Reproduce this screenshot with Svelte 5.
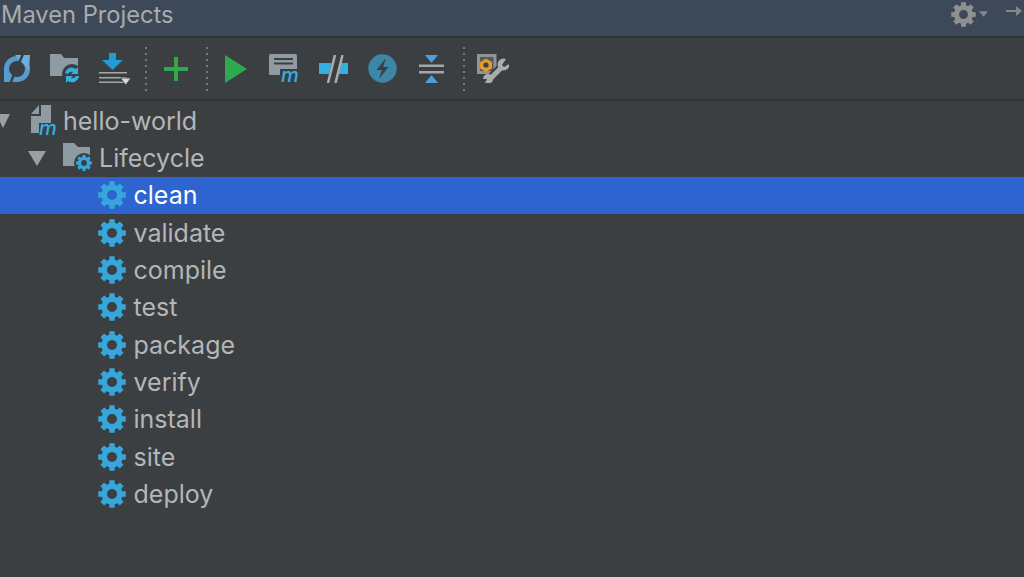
<script lang="ts">
	const goals = ['clean', 'validate', 'compile', 'test', 'package', 'verify', 'install', 'site', 'deploy'];

	// eight-tooth gear, centred on 0,0, hole is cut with evenodd
	function gearPath(outer: number, root: number, hole: number) {
		let d = '';
		for (let i = 0; i < 8; i++) {
			const a = (i * Math.PI) / 4;
			const pts = [
				[a - 0.27, root],
				[a - 0.19, outer],
				[a + 0.19, outer],
				[a + 0.27, root]
			];
			for (const [t, r] of pts) {
				d += `${d ? 'L' : 'M'}${(r * Math.sin(t)).toFixed(2)} ${(-r * Math.cos(t)).toFixed(2)}`;
			}
		}
		d += `ZM${hole} 0A${hole} ${hole} 0 1 0 ${-hole} 0A${hole} ${hole} 0 1 0 ${hole} 0Z`;
		return d;
	}
	const gear = gearPath(14, 10.6, 5);
</script>

<div class="panel">
	<header class="title-bar">
		<span class="title">Maven Projects</span>
		<div class="title-actions">
			<svg width="25" height="25" viewBox="-14 -14 28 28"><path d={gear} fill="#8e9091" fill-rule="evenodd" /></svg>
			<svg class="caret" width="9" height="6" viewBox="0 0 10 6"><path d="M0 0h10L5 6z" fill="#85888b" /></svg>
			<svg class="hide" width="16" height="14" viewBox="0 0 16 14"><path d="M0 6h10v2H0zM10 2l6 5-6 5z" fill="#85888b" /></svg>
		</div>
	</header>

	<div class="toolbar">
		<!-- reimport -->
		<div class="tool">
			<svg width="30" height="30" viewBox="0 0 30 30">
				<circle cx="15" cy="15" r="10.500" fill="none" stroke="#559ccf" stroke-width="5" />
				<path d="M13 1h15L27 16z" fill="#6cb0e0" />
				<path d="M2 28h14L2 12z" fill="#559ccf" />
				<path d="M8 30L21 0" stroke="#3c3f41" stroke-width="2.500" />
			</svg>
		</div>
		<!-- generate sources -->
		<div class="tool">
			<svg width="31" height="30" viewBox="0 0 31 30">
				<path d="M0 0h11l3 4h14v18H0z" fill="#8f9ba3" />
				<circle cx="22" cy="20" r="10" fill="#3c3f41" />
				<path d="M15 19a7 7 0 0 1 11-4l2-2v7h-7l2-2a4 4 0 0 0-5 2zM29 22a7 7 0 0 1-11 5l-2 2v-7h7l-2 2a4 4 0 0 0 5-2z" fill="#35afe0" />
			</svg>
		</div>
		<!-- download -->
		<div class="tool">
			<svg width="32" height="32" viewBox="0 0 32 32">
				<path d="M10 0h7v7h7L13.500 17 3 7h7z" fill="#1f9bd8" />
				<path d="M0 19h28v1.500H0zM0 24h28v1.500H0zM0 28.500h28V30H0z" fill="#a3a7a8" />
				<path d="M21.500 25h10.500l-5.250 7z" fill="#d8d8d8" stroke="#3c3f41" stroke-width=".8" />
			</svg>
		</div>
		<div class="sep first"></div>
		<!-- add -->
		<div class="tool">
			<svg width="24" height="24" viewBox="0 0 24 24">
				<path d="M10 0h4v10h10v4H14v10h-4V14H0v-4h10z" fill="#2fa84f" />
			</svg>
		</div>
		<div class="sep"></div>
		<!-- run -->
		<div class="tool">
			<svg width="22" height="28" viewBox="0 0 22 28"><path d="M0 0l22 14L0 28z" fill="#2fa84f" /></svg>
		</div>
		<!-- run goal -->
		<div class="tool">
			<svg class="open" width="31" height="29" viewBox="0 0 31 29">
				<rect width="28" height="21" rx="1.500" fill="#8f9ba3" />
				<path d="M5 4h19v2H5zM5 8.500h19v2H5z" fill="#3c3f41" />
				<path d="M11 15h20v14H11z" fill="#3c3f41" />
				<text x="12" y="27.500" class="m">m</text>
			</svg>
		</div>
		<!-- skip tests -->
		<div class="tool">
			<svg width="29" height="28" viewBox="0 0 29 28">
				<path d="M0 8h29v11H0z" fill="#35afe0" />
				<path d="M12.500 28L19.500 0" stroke="#3c3f41" stroke-width="9.500" />
				<path d="M9 28L16 0M16.500 28L23.500 0" stroke="#a9adb0" stroke-width="2.500" />
			</svg>
		</div>
		<!-- offline -->
		<div class="tool">
			<svg width="29" height="29" viewBox="0 0 29 29">
				<circle cx="14.500" cy="14.500" r="14.200" fill="#3c86a8" />
				<path d="M18 4L8.500 16H14l-3 9 9.500-12H15z" fill="#3c3f41" />
			</svg>
		</div>
		<!-- collapse -->
		<div class="tool">
			<svg width="25" height="28" viewBox="0 0 25 28">
				<path d="M6 0h13l-6.500 8zM6 28h13l-6.500-8z" fill="#4c9fdc" />
				<path d="M0 9.500h25V12H0zM0 16h25v2.500H0z" fill="#a3a7a8" />
			</svg>
		</div>
		<div class="sep last"></div>
		<!-- settings -->
		<div class="tool">
			<svg width="32" height="29" viewBox="0 0 32 29">
				<rect width="19.500" height="20" fill="#8f9497" />
				<rect x="3" y="3" width="13.500" height="14" fill="#55585a" />
				<path d="M9 4.500l6 3.500v6.500L9 18l-6-3.500V8z" fill="#e09b2a" />
				<circle cx="9" cy="11" r="2.600" fill="#3c3f41" />
				<path d="M12 26L25 13" stroke="#3c3f41" stroke-width="9" />
				<circle cx="26.500" cy="10.500" r="6" fill="#a9adb0" />
				<circle cx="11" cy="25" r="5" fill="#a9adb0" />
				<path d="M12 26L25 13" stroke="#a9adb0" stroke-width="5" />
				<path d="M25 11l4-6h3v5l-5 3zM10 25l-5 0v4h3z" fill="#3c3f41" />
			</svg>
		</div>
	</div>

	<div class="tree">
		<div class="row">
			<svg class="arrow root-arrow" width="14" height="14" viewBox="0 0 14 14"><path d="M0 0h14L7 14z" fill="#9c9e9f" /></svg>
			<svg class="node-icon open" width="30" height="31" viewBox="0 0 30 31">
				<path d="M0 9l8-9v9zM10 0h10v18H8v10H0V11h10z" fill="#8f9ba3" />
				<text x="8" y="29.500" class="m">m</text>
			</svg>
			<span class="label">hello-world</span>
		</div>
		<div class="row lifecycle">
			<svg class="arrow" width="18" height="15" viewBox="0 0 18 15"><path d="M0 0h18L9 15z" fill="#9c9e9f" /></svg>
			<svg class="node-icon" width="30" height="30" viewBox="0 0 30 30">
				<path d="M0 0h11l4 4h12v19H0z" fill="#8f9ba3" />
				<circle cx="21" cy="20" r="10" fill="#3c3f41" />
				<g transform="translate(21 20) scale(.58)"><path d={gear} fill="#36a7dd" fill-rule="evenodd" /></g>
			</svg>
			<span class="label">Lifecycle</span>
		</div>
		{#each goals as goal}
			<div class="row goal" class:selected={goal === 'clean'}>
				<svg width="28" height="28" viewBox="-14 -14 28 28"><path d={gear} fill="#36a7dd" fill-rule="evenodd" /></svg>
				<span class="label">{goal}</span>
			</div>
		{/each}
	</div>
</div>

<style>
	:global(body) {
		margin: 0;
		background: #3c3f41;
	}

	.panel {
		width: 1024px;
		height: 577px;
		overflow: hidden;
		background: #3c3f41;
		font-family: Inter, 'Liberation Sans', sans-serif;
	}

	.title-bar {
		display: flex;
		align-items: center;
		justify-content: space-between;
		box-sizing: border-box;
		height: 38px;
		padding: 0 2px 8px 1px;
		background: #3d4958;
		border-bottom: 2px solid #303234;
	}

	.title {
		font-size: 23.7px;
		color: #a9abac;
	}

	.title-actions {
		display: flex;
		align-items: center;
	}

	.caret {
		margin-left: 3px;
	}

	.hide {
		margin: -6px 0 0 18px;
	}

	.toolbar {
		display: flex;
		align-items: center;
		box-sizing: border-box;
		height: 63px;
		margin-left: -8px;
		border-bottom: 2px solid #303234;
	}

	.tool {
		display: flex;
		justify-content: center;
		flex: none;
		width: 49px;
	}

	.sep {
		flex: none;
		width: 2px;
		height: 44px;
		margin: 0 3px 0 6px;
		background: repeating-linear-gradient(#77797b 0 2px, transparent 2px 6px);
	}

	.sep.first {
		margin-right: 4px;
	}

	.sep.last {
		margin-left: 7px;
	}

	.open {
		overflow: visible;
	}

	.m {
		font: italic 500 20px Inter, sans-serif;
		fill: #35afe0;
	}

	.tree {
		padding-top: 1px;
	}

	.row {
		display: flex;
		align-items: center;
		height: 37.35px;
		color: #b4b6b7;
		font-size: 25px;
	}

	.arrow {
		margin-left: -4px;
	}

	.root-arrow {
		margin-right: 21px;
	}

	.lifecycle {
		padding-left: 32px;
	}

	.lifecycle .arrow {
		margin-right: 17px;
	}

	.row .node-icon {
		margin-right: 2px;
	}

	.lifecycle .node-icon {
		margin-right: 6px;
	}

	.goal {
		padding-left: 98px;
	}

	.goal svg {
		margin-right: 7.5px;
	}

	.selected {
		background: #2d64cf;
		color: #fff;
	}
</style>
